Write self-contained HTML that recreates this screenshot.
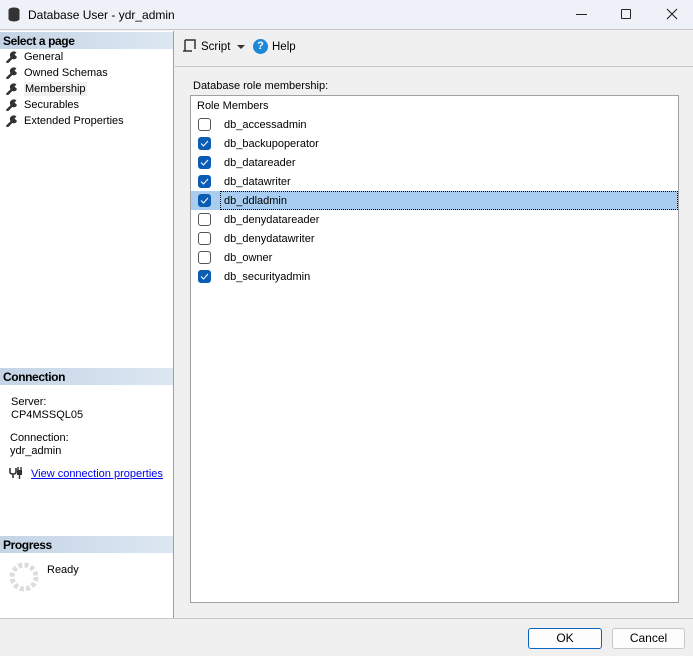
<!DOCTYPE html>
<html><head><style>
*{margin:0;padding:0;box-sizing:border-box}
body{width:693px;height:656px;overflow:hidden;font-family:"Liberation Sans",sans-serif;font-size:11px;color:#000;background:#f0f0f0;position:relative}
.abs{position:absolute}
.title{left:0;top:0;width:693px;height:30px;background:#eef2f8;border-bottom:1px solid #c8c8c8}
.left{left:0;top:31px;width:174px;height:587px;background:#fff;border-right:1px solid #a0a0a0}
.hdr{left:0;width:173px;height:17px;background:linear-gradient(90deg,#c4d4e6,#dde7f2);font-weight:bold;font-size:12px;padding:2px 3px 0;letter-spacing:-0.4px}
.nav{left:6px;font-size:11px}
.nav div{height:16px;display:flex;align-items:center}
.nav svg{margin-right:6px}
.list{left:190px;top:95px;width:489px;height:508px;background:#fff;border:1px solid #a0a0a0}
.row{position:absolute;left:0;width:487px;height:19px;display:flex;align-items:center;font-size:11px}
.cb{width:13px;height:13px;border:1px solid #555;border-radius:3px;margin-left:7px;margin-right:13px;background:#fff}
.cb.on{background:#0a5db3;border-color:#0a5db3;display:flex;align-items:center;justify-content:center}
.btn{top:628px;height:21px;border:1px solid #c8c8c8;border-radius:3px;background:#fdfdfd;text-align:center;line-height:19px;font-size:12px}
</style></head><body>
<div class="abs title">
 <svg class="abs" style="left:8px;top:7px" width="12" height="15"><ellipse cx="6" cy="3" rx="5.5" ry="2.5" fill="#333"/><rect x="0.5" y="3" width="11" height="9" fill="#333"/><ellipse cx="6" cy="12" rx="5.5" ry="2.5" fill="#333"/></svg>
 <div class="abs" style="left:28px;top:8px;font-size:12px">Database User - ydr_admin</div>
 <div class="abs" style="left:576px;top:14px;width:11px;height:1px;background:#222"></div>
 <div class="abs" style="left:621px;top:9px;width:10px;height:10px;border:1px solid #222;border-radius:1px"></div>
 <svg class="abs" style="left:666px;top:8px" width="12" height="12"><path d="M1 1L11 11M11 1L1 11" stroke="#222" stroke-width="1.1"/></svg>
</div>
<div class="abs left"></div>
<div class="abs hdr" style="top:32px">Select a page</div>
<div class="abs nav" style="top:49px">
 <div><svg width="12" height="12"><path d="M1.5 11L6 6.5" stroke="#333" stroke-width="2.6" stroke-linecap="round"/><path d="M5 7A3.5 3.5 0 0 1 10.5 1.5L8.5 3.5L9 4L10.5 5.5L11 6A3.5 3.5 0 0 1 5 7Z" fill="#333"/></svg>General</div>
 <div><svg width="12" height="12"><path d="M1.5 11L6 6.5" stroke="#333" stroke-width="2.6" stroke-linecap="round"/><path d="M5 7A3.5 3.5 0 0 1 10.5 1.5L8.5 3.5L9 4L10.5 5.5L11 6A3.5 3.5 0 0 1 5 7Z" fill="#333"/></svg>Owned Schemas</div>
 <div><svg width="12" height="12"><path d="M1.5 11L6 6.5" stroke="#333" stroke-width="2.6" stroke-linecap="round"/><path d="M5 7A3.5 3.5 0 0 1 10.5 1.5L8.5 3.5L9 4L10.5 5.5L11 6A3.5 3.5 0 0 1 5 7Z" fill="#333"/></svg><span style="background:#f0f0f0;padding:1px">Membership</span></div>
 <div><svg width="12" height="12"><path d="M1.5 11L6 6.5" stroke="#333" stroke-width="2.6" stroke-linecap="round"/><path d="M5 7A3.5 3.5 0 0 1 10.5 1.5L8.5 3.5L9 4L10.5 5.5L11 6A3.5 3.5 0 0 1 5 7Z" fill="#333"/></svg>Securables</div>
 <div><svg width="12" height="12"><path d="M1.5 11L6 6.5" stroke="#333" stroke-width="2.6" stroke-linecap="round"/><path d="M5 7A3.5 3.5 0 0 1 10.5 1.5L8.5 3.5L9 4L10.5 5.5L11 6A3.5 3.5 0 0 1 5 7Z" fill="#333"/></svg>Extended Properties</div>
</div>
<div class="abs hdr" style="top:368px">Connection</div>
<div class="abs" style="left:11px;top:396px;font-size:11px;line-height:13px">Server:<br>CP4MSSQL05</div>
<div class="abs" style="left:10px;top:432px;font-size:11px;line-height:13px">Connection:<br>ydr_admin</div>
<svg class="abs" style="left:9px;top:467px" width="14" height="12"><path d="M1 1V5Q1 7 4 7V11M7 1V5Q7 7 4 7" stroke="#333" stroke-width="1.6" fill="none"/><rect x="8" y="3" width="5" height="5" fill="#333"/><path d="M9 0V3M12 0V3M10.5 8V12" stroke="#333" stroke-width="1.4"/></svg>
<div class="abs" style="left:31px;top:468px;font-size:11px;color:#0000ee;text-decoration:underline">View connection properties</div>
<div class="abs hdr" style="top:536px">Progress</div>
<svg class="abs" style="left:9px;top:562px" width="30" height="30"><circle cx="15" cy="15" r="12" fill="none" stroke="#ddd" stroke-width="5" stroke-dasharray="4 2.3"/></svg>
<div class="abs" style="left:47px;top:564px;font-size:11px">Ready</div>

<div class="abs" style="left:175px;top:66px;width:518px;height:1px;background:#c8c8c8"></div>
<svg class="abs" style="left:182px;top:39px" width="14" height="14"><path d="M3 1H13V10M3 1V12H10M1 12H10" stroke="#333" stroke-width="1.5" fill="none"/></svg>
<div class="abs" style="left:201px;top:41px;font-size:11.5px">Script</div>
<div class="abs" style="left:237px;top:45px;border-left:4px solid transparent;border-right:4px solid transparent;border-top:4px solid #333"></div>
<div class="abs" style="left:253px;top:39px;width:15px;height:15px;border-radius:50%;background:#1e88d8;color:#fff;font-weight:bold;font-size:11px;text-align:center;line-height:15px">?</div>
<div class="abs" style="left:272px;top:41px;font-size:11.5px">Help</div>

<div class="abs" style="left:193px;top:80px;font-size:11px">Database role membership:</div>
<div class="abs list">
 <div class="abs" style="left:6px;top:4px;font-size:11px">Role Members</div>
 <div class="row" style="top:19px"><div class="cb"></div>db_accessadmin</div>
 <div class="row" style="top:38px"><div class="cb on"><svg width="9" height="7"><path d="M1 3.5L3.5 6L8 1" stroke="#fff" stroke-width="1" fill="none"/></svg></div>db_backupoperator</div>
 <div class="row" style="top:57px"><div class="cb on"><svg width="9" height="7"><path d="M1 3.5L3.5 6L8 1" stroke="#fff" stroke-width="1" fill="none"/></svg></div>db_datareader</div>
 <div class="row" style="top:76px"><div class="cb on"><svg width="9" height="7"><path d="M1 3.5L3.5 6L8 1" stroke="#fff" stroke-width="1" fill="none"/></svg></div>db_datawriter</div>
 <div class="row" style="top:95px;background:#a8cdf0"><div class="cb on"><svg width="9" height="7"><path d="M1 3.5L3.5 6L8 1" stroke="#fff" stroke-width="1" fill="none"/></svg></div><span style="position:absolute;left:29px;top:0;width:458px;height:19px;border:1px dotted #000;padding-left:3px;line-height:18px">db_ddladmin</span></div>
 <div class="row" style="top:114px"><div class="cb"></div>db_denydatareader</div>
 <div class="row" style="top:133px"><div class="cb"></div>db_denydatawriter</div>
 <div class="row" style="top:152px"><div class="cb"></div>db_owner</div>
 <div class="row" style="top:171px"><div class="cb on"><svg width="9" height="7"><path d="M1 3.5L3.5 6L8 1" stroke="#fff" stroke-width="1" fill="none"/></svg></div>db_securityadmin</div>
</div>
<div class="abs" style="left:0;top:618px;width:693px;height:1px;background:#c8c8c8"></div>
<div class="abs btn" style="left:528px;width:74px;border-color:#0a64c0">OK</div>
<div class="abs btn" style="left:612px;width:73px">Cancel</div>
</body></html>
